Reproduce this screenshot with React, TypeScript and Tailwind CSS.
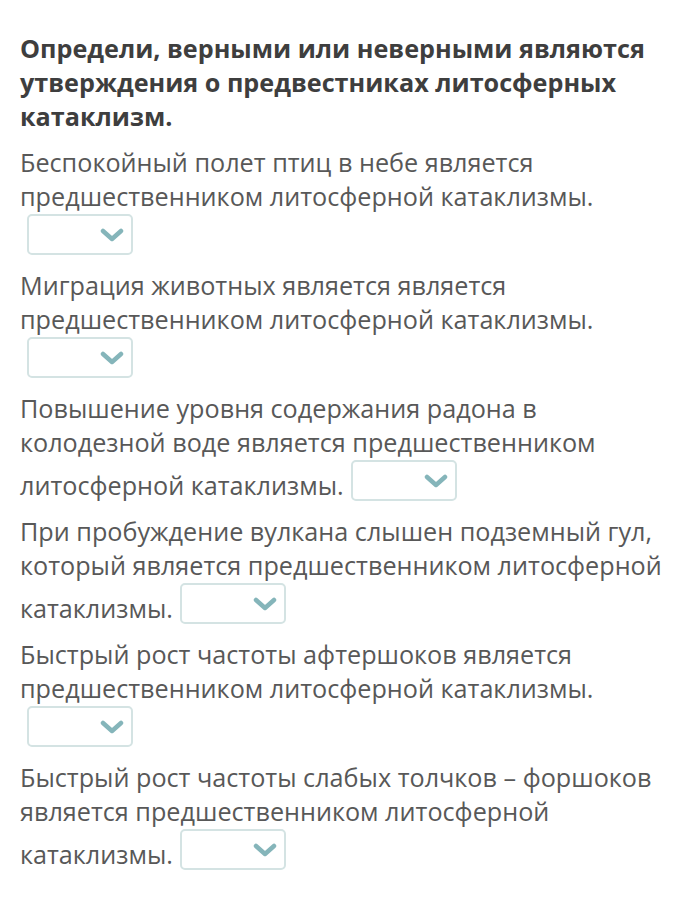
import React from 'react'

const items: string[] = [
  'Беспокойный полет птиц в небе является предшественником литосферной катаклизмы.',
  'Миграция животных является является предшественником литосферной катаклизмы.',
  'Повышение уровня содержания радона в колодезной воде является предшественником литосферной катаклизмы.',
  'При пробуждение вулкана слышен подземный гул, который является предшественником литосферной катаклизмы.',
  'Быстрый рост частоты афтершоков является предшественником литосферной катаклизмы.',
  'Быстрый рост частоты слабых толчков – форшоков является предшественником литосферной катаклизмы.',
]

// empty dropdown, sits with its bottom a little below the text baseline
function Select() {
  return (
    <span className="ml-[7px] my-[1px] inline-block h-[41px] w-[106px] overflow-hidden align-[-7px]">
      <span className="flex h-full w-full items-center justify-end rounded-[5px] border-2 border-[#d4e3e3] bg-white pr-[7px]">
        <svg width="24" height="14" viewBox="0 0 24 14" fill="none">
          <polyline points="3,3 12,11 21,3" stroke="#85b5ba" strokeWidth="4.5" strokeLinecap="round" strokeLinejoin="round" />
        </svg>
      </span>
    </span>
  )
}

export default function App() {
  return (
    <div className="min-h-[908px] bg-white px-5 pt-[31px]" style={{ fontFamily: '"Open Sans", "Noto Sans", sans-serif' }}>
      <h1 className="mb-[12px] text-[25.2px] font-bold leading-[34px] text-[#3e3e3e]">
        Определи, верными или неверными являются утверждения о предвестниках литосферных катаклизм.
      </h1>
      <div className="flex flex-col gap-[12px]">
        {items.map((t, i) => (
          <p key={i} className="text-[25.2px] leading-[34px] text-[#585858]">
            {t}
            <Select />
          </p>
        ))}
      </div>
    </div>
  )
}
